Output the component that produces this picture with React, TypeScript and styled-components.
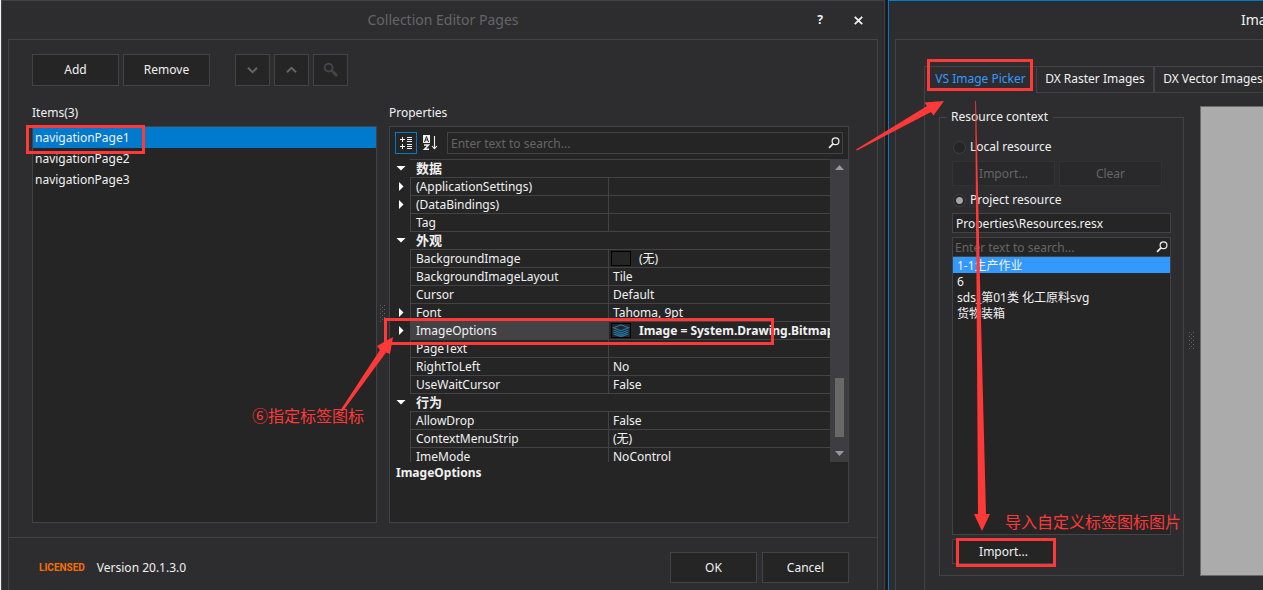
import React from "react";
import styled, { createGlobalStyle, css } from "styled-components";

const color = {
  window: "#2d2d30",
  field: "#252526",
  line: "#434346",
  text: "#f1f1f1",
  muted: "#656565",
  accent: "#007acc",
  mark: "#ff3838",
};

const GlobalStyle = createGlobalStyle`
  *, *::before, *::after { box-sizing: border-box; }
  body {
    margin: 0;
    overflow: hidden;
    background: #1b1b1c;
    color: ${color.text};
    font: 12px/16px "Noto Sans", "Noto Sans CJK SC", sans-serif;
  }
  button, input { font: inherit; color: inherit; }
  ul { list-style: none; margin: 0; padding: 0; }
`;

const Desktop = styled.main`
  position: relative;
  display: grid;
  grid-template-columns: minmax(0, 884fr) minmax(0, 375fr);
  grid-template-rows: minmax(0, 1fr);
  gap: 3px;
  height: 100vh;
  min-height: 480px;
  border-left: 1px solid #f4f4f4;
  overflow: hidden;
`;

const Window = styled.section<{ $active?: boolean }>`
  display: flex;
  flex-direction: column;
  min-width: 0;
  padding: 0 6px;
  background: ${color.window};
  border: 1px solid ${(p) => (p.$active ? color.accent : color.line)};
  border-bottom: 0;
  ${(p) => p.$active && css`border-right: 0; padding-right: 0;`}
`;

const TitleBar = styled.header`
  display: grid;
  grid-template-columns: 1fr auto 1fr;
  align-items: center;
  height: 38px;
  flex: none;
`;

const Title = styled.h1<{ $active?: boolean }>`
  grid-column: 2;
  margin: 0;
  font-size: 14px;
  line-height: 20px;
  font-weight: 400;
  white-space: nowrap;
  color: ${(p) => (p.$active ? color.text : color.muted)};
`;

const ClippedTitleBar = styled.header`
  display: flex;
  align-items: center;
  justify-content: flex-end;
  height: 38px;
  flex: none;
  overflow: hidden;
`;

const TitleSlot = styled.div`
  width: 22px;
`;

const Captions = styled.div`
  display: flex;
  justify-content: flex-end;
  gap: 18px;
  padding-right: 10px;
`;

const CaptionButton = styled.button`
  display: grid;
  place-items: center;
  width: 20px;
  height: 20px;
  padding: 0;
  border: 0;
  background: none;
  font-weight: 700;
`;

const Frame = styled.div<{ $open?: boolean }>`
  display: flex;
  flex-direction: column;
  flex: 1;
  min-height: 0;
  border: 1px solid ${color.line};
  border-bottom: 0;
  ${(p) => p.$open && css`border-right: 0; padding: 26px 0 0 28px;`}
`;

const EditorBody = styled.div`
  display: flex;
  flex-direction: column;
  flex: 1;
  min-height: 0;
  padding: 14px 28px 14px 23px;
`;

const Toolbar = styled.div`
  display: flex;
  flex: none;
  gap: 4px;
  height: 32px;
`;

const Button = styled.button<{ $width?: number }>`
  display: grid;
  place-items: center;
  width: ${(p) => p.$width ?? 87}px;
  padding: 0;
  border: 1px solid ${color.line};
  background: ${color.field};
  &:disabled { color: ${color.muted}; }
`;

const MoveGroup = styled.div`
  display: flex;
  gap: 4px;
  margin-left: 21px;
`;

const Columns = styled.div`
  display: grid;
  grid-template-columns: minmax(0, 3fr) 12px minmax(0, 4fr);
  grid-template-rows: minmax(0, 1fr);
  flex: 1;
  min-height: 0;
  margin-top: 19px;
`;

const Column = styled.div`
  display: flex;
  flex-direction: column;
  min-width: 0;
  min-height: 0;
`;

const ColumnLabel = styled.h2`
  margin: 0;
  padding-bottom: 5px;
  font-size: 12px;
  line-height: 16px;
  font-weight: 400;
`;

const Panel = styled.div`
  display: flex;
  flex-direction: column;
  flex: 1;
  min-height: 0;
  border: 1px solid ${color.line};
  background: ${color.field};
`;

const PageItem = styled.li<{ $selected?: boolean }>`
  padding: 0 2px;
  line-height: 21px;
  background: ${(p) => (p.$selected ? color.accent : "transparent")};
`;

const Splitter = styled.div`
  display: grid;
  place-items: center;
`;

const GridToolbar = styled.div`
  display: flex;
  flex: none;
  gap: 2px;
  padding: 5px;
`;

const ToolButton = styled.button<{ $checked?: boolean }>`
  display: grid;
  place-items: center;
  width: 22px;
  height: 22px;
  padding: 0;
  border: 1px solid ${(p) => (p.$checked ? color.accent : "transparent")};
  background: none;
`;

const SearchField = styled.label<{ $inList?: boolean }>`
  display: flex;
  align-items: center;
  flex: 1;
  min-width: 0;
  margin-left: 4px;
  padding: 0 2px 0 3px;
  border: 1px solid ${color.line};
  ${(p) => p.$inList && css`
    flex: none;
    height: 19px;
    margin-left: 0;
    border-width: 0 0 1px;
    padding: 0 2px;
  `}
`;

const SearchInput = styled.input`
  flex: 1;
  min-width: 0;
  padding: 2px 0 0;
  border: 0;
  outline: 0;
  background: none;
  line-height: 16px;
  &::placeholder { color: ${color.muted}; opacity: 1; }
`;

const GridArea = styled.div`
  display: flex;
  flex: 1;
  min-height: 0;
`;

const GridView = styled.div`
  flex: 1;
  min-width: 0;
  overflow: hidden;
`;

const Table = styled.table`
  width: 100%;
  table-layout: fixed;
  border-collapse: separate;
  border-spacing: 0;
`;

const ExpanderColumn = styled.col`
  width: 20px;
`;

const NameColumn = styled.col`
  width: 198px;
`;

const ExpandCell = styled.td`
  height: 18px;
  padding: 0 0 0 5px;
  line-height: 0;
`;

const NameCell = styled.th<{ $selected?: boolean }>`
  height: 18px;
  padding: 0 0 0 5px;
  border: solid ${color.line};
  border-width: 1px 0 0 1px;
  background: ${(p) => (p.$selected ? color.line : "transparent")};
  font-weight: 400;
  line-height: 17px;
  text-align: left;
  white-space: nowrap;
  overflow: hidden;
`;

const CategoryCell = styled.th`
  height: 18px;
  padding: 0 0 0 6px;
  border-top: 1px solid ${color.line};
  font-size: 13px;
  font-weight: 700;
  line-height: 17px;
  text-align: left;
`;

const ValueCell = styled.td<{ $bold?: boolean }>`
  height: 18px;
  padding: 0 0 0 4px;
  border: solid ${color.line};
  border-width: 1px 0 0 1px;
  font-weight: ${(p) => (p.$bold ? 700 : 400)};
  line-height: 17px;
  white-space: nowrap;
  overflow: hidden;
`;

const ValueWithSwatch = styled.span`
  display: flex;
  align-items: center;
  gap: 8px;
  height: 17px;
  margin-left: -2px;
`;

const Swatch = styled.span`
  display: grid;
  place-items: center;
  flex: none;
  width: 20px;
  height: 15px;
  border: 1px solid #000;
`;

const ScrollBar = styled.div`
  display: flex;
  flex-direction: column;
  width: 18px;
  background: #3e3e42;
`;

const ScrollButton = styled.button`
  display: grid;
  place-items: center;
  height: 17px;
  padding: 0;
  border: 0;
  background: #3e3e42;
`;

const ScrollTrack = styled.div`
  display: flex;
  flex-direction: column;
  justify-content: flex-end;
  align-items: center;
  flex: 1;
  padding-bottom: 8px;
`;

const ScrollThumb = styled.div`
  width: 9px;
  height: 59px;
  background: #686868;
`;

const Description = styled.div`
  flex: none;
  height: 60px;
  padding: 3px 6px;
  font-weight: 700;
`;

const Footer = styled.footer`
  display: flex;
  align-items: center;
  height: 53px;
  flex: none;
  padding: 7px 28px 0 30px;
  border-top: 1px solid ${color.line};
`;

const Licensed = styled.span`
  color: #f57000;
  font: 700 10px/16px Roboto, sans-serif;
  margin-right: 12px;
`;

const FooterButtons = styled.div`
  display: flex;
  gap: 5px;
  height: 31px;
  margin-left: auto;
`;

const Tabs = styled.div`
  display: flex;
  flex: none;
  height: 27px;
  border-left: 1px solid ${color.line};
  overflow: hidden;
`;

const Tab = styled.button<{ $active?: boolean }>`
  flex: none;
  min-width: 118px;
  padding: 0 6px 2px;
  border: 1px solid ${color.line};
  background: none;
  white-space: nowrap;
  ${(p) => p.$active && css`
    min-width: 111px;
    border-width: 1px 0 0;
    color: #3399ff;
  `}
`;

const TabPage = styled.div`
  display: flex;
  flex: 1;
  min-height: 0;
  padding: 13px 0 14px 14px;
  border-left: 1px solid ${color.line};
`;

const GroupBox = styled.fieldset`
  display: flex;
  flex-direction: column;
  flex: none;
  width: 245px;
  min-height: 0;
  margin: 3px 0 0;
  padding: 14px 12px 11px;
  border: 1px solid ${color.line};
`;

const Legend = styled.legend`
  margin-left: -5px;
  padding: 0 5px 0 4px;
`;

const RadioLabel = styled.label`
  display: flex;
  align-items: center;
  gap: 4px;
  height: 16px;
`;

const Radio = styled.input`
  appearance: none;
  width: 13px;
  height: 13px;
  margin: 0 0 0 1px;
  border: 1px solid #3f3f42;
  border-radius: 50%;
  background: ${color.field};
  &:checked {
    background: radial-gradient(circle, #a5a5a5 3px, ${color.field} 4px);
  }
`;

const ButtonRow = styled.div<{ $faded?: boolean }>`
  display: flex;
  gap: 4px;
  height: 25px;
  flex: none;
  margin: ${(p) => (p.$faded ? "6px 0" : "4px 0 0")};
  & > button { ${(p) => p.$faded && css`background: #29292b; border-color: #323235;`} }
`;

const ResourceFile = styled.input`
  flex: none;
  width: 219px;
  height: 20px;
  margin: 5px 0 4px;
  padding: 0 3px;
  border: 1px solid ${color.line};
  outline: 0;
  background: ${color.field};
`;

const ResourcePanel = styled(Panel)`
  width: 219px;
`;

const ResourceItem = styled.li<{ $selected?: boolean }>`
  height: 16px;
  padding: 0 4px;
  line-height: 18px;
  white-space: nowrap;
  background: ${(p) => (p.$selected ? "#3399ff" : "transparent")};
`;

const PreviewSplitter = styled(Splitter)`
  width: 16px;
  flex: none;
`;

const Preview = styled.div`
  flex: 1;
  border: 1px solid #6b6b6b;
  border-right: 0;
  background: #ababab;
`;

const Markup = styled.div`
  position: absolute;
  inset: 0;
  pointer-events: none;
`;

const MarkBox = styled.div<{ $x: number; $y: number; $w: number; $h: number }>`
  position: absolute;
  left: ${(p) => p.$x}px;
  top: ${(p) => p.$y}px;
  width: ${(p) => p.$w}px;
  height: ${(p) => p.$h}px;
  border: 3px solid ${color.mark};
`;

const MarkText = styled.span<{ $x: number; $y: number }>`
  position: absolute;
  left: ${(p) => p.$x}px;
  top: ${(p) => p.$y}px;
  color: ${color.mark};
  font: 16px/20px "Noto Sans CJK SC", sans-serif;
  white-space: nowrap;
`;

const MarkArrows = styled.svg`
  position: absolute;
  left: 0;
  top: 0;
`;

const SearchIcon = () => (
  <svg width="12" height="12" viewBox="0 0 12 12" fill="none" stroke="#f1f1f1" aria-hidden="true">
    <circle cx="7.5" cy="4.3" r="3.4" strokeWidth="1.2" />
    <path d="M5 6.9 1 10.9" strokeWidth="1.6" />
  </svg>
);

const LensIcon = () => (
  <svg width="16" height="16" viewBox="0 0 16 16" fill="none" stroke="#454547" aria-hidden="true">
    <circle cx="5.6" cy="5.6" r="3.9" strokeWidth="2" />
    <path d="M8.600 8.600l5.400 5.400" strokeWidth="2.800" />
  </svg>
);

const Chevron = ({ up }: { up?: boolean }) => (
  <svg width="12" height="8" viewBox="0 0 12 8" fill="none" stroke="#656568" strokeWidth="2" aria-hidden="true">
    <path d={up ? "M1 6.200 5.500 1.800l4.500 4.400" : "M1 1.800 5.500 6.200l4.500-4.400"} />
  </svg>
);

const CategorizedIcon = () => (
  <svg width="14" height="14" viewBox="0 0 14 14" fill="#f1f1f1" shapeRendering="crispEdges" aria-hidden="true">
    <path d="M3 1h1v5H3zM1 3h5v1H1zM3 8h1v5H3zM1 10h5v1H1zM8 1h5v1H8zM8 3h5v1H8zM8 5h5v1H8zM8 8h5v1H8zM8 10h5v1H8zM8 12h5v1H8z" />
  </svg>
);

const SortIcon = () => (
  <svg width="16" height="16" viewBox="0 0 16 16" aria-hidden="true">
    <path d="M1 0h7v8H1z" fill="#f1f1f1" />
    <path d="M2.500 7 4.500 1.500 6.500 7M3.200 5h2.600" fill="none" stroke="#252526" />
    <path d="M2 10h4.500L2.500 14.300H7" fill="none" stroke="#f1f1f1" strokeWidth="1.500" />
    <path d="M12.500 1v12.500M10 11l2.500 2.700L15 11" fill="none" stroke="#f1f1f1" strokeWidth="1.100" />
  </svg>
);

const LayersIcon = () => (
  <svg width="18" height="13" viewBox="0 0 18 13" fill="none" stroke="#1f78a8" strokeWidth="1.200" aria-hidden="true">
    <path d="M9 .800 16.500 3.800 9 6.800 1.500 3.800zM1.500 6 9 9l7.500-3M1.500 8 9 11l7.500-3M1.500 10 9 12.600l7.500-2.600" />
  </svg>
);

const Expander = ({ open }: { open?: boolean }) => (
  <svg width="11" height="9" viewBox="0 0 11 9" fill="#fff" aria-hidden="true">
    <path d={open ? "M1.500 2h9L6 6.500z" : "M4 0v9l4.500-4.500z"} />
  </svg>
);

const ScrollArrow = ({ down }: { down?: boolean }) => (
  <svg width="9" height="5" viewBox="0 0 9 5" fill="#999" aria-hidden="true">
    <path d={down ? "M0 0h9L4.500 5z" : "M0 5h9L4.500 0z"} />
  </svg>
);

const Grip = () => (
  <svg width="6" height="18" viewBox="0 0 6 18" fill="#626266" shapeRendering="crispEdges" aria-hidden="true">
    {[0, 4, 8, 12, 16].map((y) => (
      <path key={y} d={`M0 ${y}h1v1H0zM4 ${y}h1v1H4zM2 ${y + 2}h1v1H2z`} />
    ))}
  </svg>
);

type Property = {
  name: string;
  value?: string;
  category?: boolean;
  expandable?: boolean;
  selected?: boolean;
  swatch?: "empty" | "layers";
};

const properties: Property[] = [
  { name: "数据", category: true },
  { name: "(ApplicationSettings)", expandable: true },
  { name: "(DataBindings)", expandable: true },
  { name: "Tag" },
  { name: "外观", category: true },
  { name: "BackgroundImage", value: "(无)", swatch: "empty" },
  { name: "BackgroundImageLayout", value: "Tile" },
  { name: "Cursor", value: "Default" },
  { name: "Font", value: "Tahoma, 9pt", expandable: true },
  { name: "ImageOptions", value: "Image = System.Drawing.Bitmap", expandable: true, selected: true, swatch: "layers" },
  { name: "PageText" },
  { name: "RightToLeft", value: "No" },
  { name: "UseWaitCursor", value: "False" },
  { name: "行为", category: true },
  { name: "AllowDrop", value: "False" },
  { name: "ContextMenuStrip", value: "(无)" },
  { name: "ImeMode", value: "NoControl" },
];

const PropertyRow = ({ item }: { item: Property }) => (
  <tr>
    <ExpandCell>{(item.category || item.expandable) && <Expander open={item.category} />}</ExpandCell>
    {item.category ? (
      <CategoryCell colSpan={2} scope="rowgroup">{item.name}</CategoryCell>
    ) : (
      <>
        <NameCell scope="row" $selected={item.selected}>{item.name}</NameCell>
        <ValueCell $bold={item.selected}>
          {item.swatch ? (
            <ValueWithSwatch>
              <Swatch>{item.swatch === "layers" && <LayersIcon />}</Swatch>
              {item.value}
            </ValueWithSwatch>
          ) : (
            item.value
          )}
        </ValueCell>
      </>
    )}
  </tr>
);

const CollectionEditor = () => (
  <Window aria-label="Collection Editor Pages">
    <TitleBar>
      <Title>Collection Editor Pages</Title>
      <Captions>
        <CaptionButton aria-label="Help">?</CaptionButton>
        <CaptionButton aria-label="Close">
          <svg width="9" height="9" viewBox="0 0 9 9" stroke="#f1f1f1" strokeWidth="1.800" aria-hidden="true">
            <path d="M.800.800l7.400 7.400M8.200.800.800 8.200" />
          </svg>
        </CaptionButton>
      </Captions>
    </TitleBar>
    <Frame>
      <EditorBody>
        <Toolbar>
          <Button>Add</Button>
          <Button>Remove</Button>
          <MoveGroup>
            <Button $width={35} aria-label="Move down"><Chevron /></Button>
            <Button $width={35} aria-label="Move up"><Chevron up /></Button>
            <Button $width={35} aria-label="Search"><LensIcon /></Button>
          </MoveGroup>
        </Toolbar>
        <Columns>
          <Column>
            <ColumnLabel>Items(3)</ColumnLabel>
            <Panel>
              <ul role="listbox" aria-label="Items">
                {["navigationPage1", "navigationPage2", "navigationPage3"].map((page, i) => (
                  <PageItem key={page} role="option" aria-selected={i === 0} $selected={i === 0}>{page}</PageItem>
                ))}
              </ul>
            </Panel>
          </Column>
          <Splitter><Grip /></Splitter>
          <Column>
            <ColumnLabel>Properties</ColumnLabel>
            <Panel>
              <GridToolbar>
                <ToolButton $checked aria-label="Categorized"><CategorizedIcon /></ToolButton>
                <ToolButton aria-label="Alphabetical"><SortIcon /></ToolButton>
                <SearchField>
                  <SearchInput type="text" aria-label="Search properties" placeholder="Enter text to search..." />
                  <SearchIcon />
                </SearchField>
              </GridToolbar>
              <GridArea>
                <GridView>
                  <Table>
                    <colgroup>
                      <ExpanderColumn />
                      <NameColumn />
                      <col />
                    </colgroup>
                    <tbody>
                      {properties.map((item) => <PropertyRow key={item.name} item={item} />)}
                    </tbody>
                  </Table>
                </GridView>
                <ScrollBar>
                  <ScrollButton aria-label="Scroll up"><ScrollArrow /></ScrollButton>
                  <ScrollTrack><ScrollThumb /></ScrollTrack>
                  <ScrollButton aria-label="Scroll down"><ScrollArrow down /></ScrollButton>
                </ScrollBar>
              </GridArea>
              <Description>ImageOptions</Description>
            </Panel>
          </Column>
        </Columns>
      </EditorBody>
      <Footer>
        <Licensed>LICENSED</Licensed>
        <span>Version 20.1.3.0</span>
        <FooterButtons>
          <Button>OK</Button>
          <Button>Cancel</Button>
        </FooterButtons>
      </Footer>
    </Frame>
  </Window>
);

const ImagePicker = () => (
  <Window $active aria-label="Image Picker">
    <ClippedTitleBar>
      <TitleSlot><Title $active>Image Picker</Title></TitleSlot>
    </ClippedTitleBar>
    <Frame $open>
      <Tabs role="tablist">
        <Tab role="tab" $active aria-selected="true">VS Image Picker</Tab>
        <Tab role="tab" aria-selected="false">DX Raster Images</Tab>
        <Tab role="tab" aria-selected="false">DX Vector Images</Tab>
      </Tabs>
      <TabPage>
        <GroupBox>
          <Legend>Resource context</Legend>
          <RadioLabel><Radio type="radio" name="context" />Local resource</RadioLabel>
          <ButtonRow $faded>
            <Button $width={103} disabled>Import...</Button>
            <Button $width={103} disabled>Clear</Button>
          </ButtonRow>
          <RadioLabel><Radio type="radio" name="context" defaultChecked />Project resource</RadioLabel>
          <ResourceFile type="text" aria-label="Resource file" defaultValue="Properties\Resources.resx" />
          <ResourcePanel>
            <SearchField $inList>
              <SearchInput type="text" aria-label="Search resources" placeholder="Enter text to search..." />
              <SearchIcon />
            </SearchField>
            <ul role="listbox" aria-label="Resources">
              {["1-1生产作业", "6", "sds_第01类 化工原料svg", "货物装箱"].map((name, i) => (
                <ResourceItem key={name} role="option" aria-selected={i === 0} $selected={i === 0}>{name}</ResourceItem>
              ))}
            </ul>
          </ResourcePanel>
          <ButtonRow>
            <Button $width={103}>Import...</Button>
          </ButtonRow>
        </GroupBox>
        <PreviewSplitter><Grip /></PreviewSplitter>
        <Preview />
      </TabPage>
    </Frame>
  </Window>
);

const Annotations = () => (
  <Markup>
    <MarkBox $x={25} $y={125} $w={119} $h={29} />
    <MarkBox $x={383} $y={318} $w={390} $h={27} />
    <MarkBox $x={926} $y={59} $w={106} $h={32} />
    <MarkBox $x={955} $y={538} $w={100} $h={29} />
    <MarkArrows width="1262" height="590" viewBox="1 0 1262 590" fill={color.mark} aria-hidden="true">
      <path d="M856 149.500 927 106l-2.500-3.500L944 101l-10.500 14.500-2.500-3.500L857 150.500z" />
      <path d="M975.200 101h.800l4 180 6 233h4l-8 17-8-17h4l-1.500-233z" />
      <path d="M340 411 380 350l-3-4 16-9-3 17-4-1.500L343 411z" />
    </MarkArrows>
    <MarkText $x={251} $y={405}>⑥指定标签图标</MarkText>
    <MarkText $x={1004} $y={511}>导入自定义标签图标图片</MarkText>
  </Markup>
);

export default function App() {
  return (
    <>
      <GlobalStyle />
      <Desktop>
        <CollectionEditor />
        <ImagePicker />
        <Annotations />
      </Desktop>
    </>
  );
}
